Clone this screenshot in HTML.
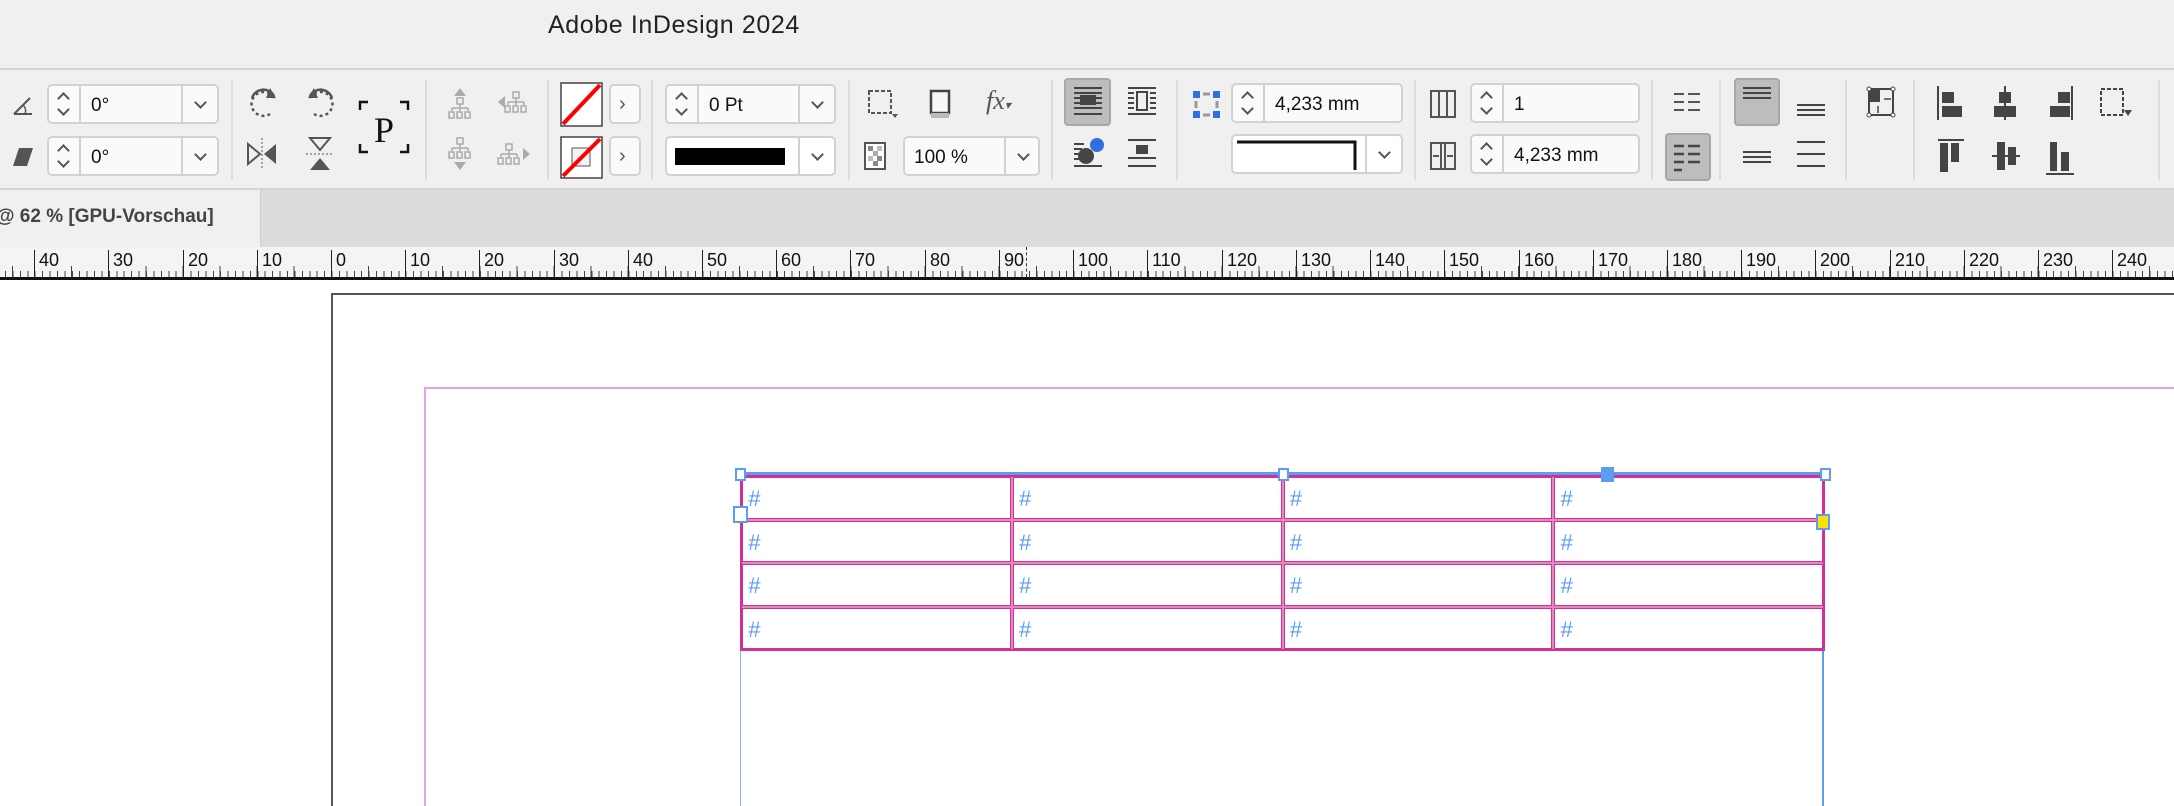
<!DOCTYPE html>
<html><head><meta charset="utf-8">
<style>
*{margin:0;padding:0;box-sizing:border-box}
body{width:2174px;height:806px;overflow:hidden;background:#fff;font-family:"Liberation Sans",sans-serif;position:relative}
.a{position:absolute}
#title{left:0;top:0;width:2174px;height:68px;background:#f0f0f0}
#title span{position:absolute;left:548px;top:11px;font-size:25px;letter-spacing:0.6px;color:#222}
#tb{left:0;top:68px;width:2174px;height:122px;background:#f0f0f0;border-top:2px solid #d4d4d4;border-bottom:2px solid #d4d4d4}
.box{position:absolute;height:40px;background:#fafafa;border:2px solid #d2d2d2;border-radius:5px;font-size:19px;color:#111}
.box .st{position:absolute;left:0;top:0;width:32px;height:100%;border-right:2px solid #d2d2d2}
.box .st:before{content:"";position:absolute;left:10px;top:8px;width:7px;height:7px;border-left:2px solid #555;border-top:2px solid #555;transform:rotate(45deg)}
.box .st:after{content:"";position:absolute;left:10px;bottom:8px;width:7px;height:7px;border-right:2px solid #555;border-bottom:2px solid #555;transform:rotate(45deg)}
.box .t{position:absolute;left:42px;top:9px}
.box .dd{position:absolute;right:0;top:0;width:36px;height:100%;border-left:2px solid #d2d2d2}
.box .dd:after{content:"";position:absolute;left:13px;top:12px;width:7px;height:7px;border-right:2px solid #555;border-bottom:2px solid #555;transform:rotate(45deg)}
.sep{position:absolute;top:80px;width:2px;height:100px;background:#dcdcdc}
.sel{position:absolute;background:#bdbdbd;border:2px solid #a8a8a8;border-radius:4px}
#tab{left:0;top:190px;width:2174px;height:57px;background:#dcdcdc}
#tab div{position:absolute;left:0;top:0;width:261px;height:57px;background:#f0f0f0;border-right:1px solid #cfcfcf}
#tab span{position:absolute;left:-4px;top:16px;font-size:19px;color:#444;font-weight:bold}
#ruler{left:0;top:247px;width:2174px;height:33px;background:#f4f4f4;border-bottom:3px solid #111}
.tk{position:absolute;left:0;bottom:0;width:2174px}
.lb{position:absolute;top:3px;font-size:18px;color:#111;padding-left:4px;border-left:1px solid #222;height:27px}
.h{position:absolute;background:#fff;border:2px solid #5b9cf5}
.c{background:#fff;border:1.5px solid #d42f97;position:relative}.c:after{content:"#";position:absolute;left:5px;top:8px;font-size:22px;font-style:italic;color:#5b9cf5}
</style></head><body>
<div class="a" id="title"><span>Adobe InDesign 2024</span></div>
<div class="a" id="tb">
<svg class="a" style="left:10px;top:22px" width="26" height="26"><path d="M4 22 L22 22 M4 22 L20 6" stroke="#555" stroke-width="2" fill="none"/><path d="M13 13 Q17 17 15 22" stroke="#555" stroke-width="1.5" fill="none"/></svg>
<svg class="a" style="left:10px;top:74px" width="26" height="26"><path d="M9 4 L23 4 L17 22 L3 22Z" fill="#555"/></svg>
<div class="box" style="left:47px;top:14px;width:172px"><div class="st"></div><span class="t">0°</span><div class="dd"></div></div>
<div class="box" style="left:47px;top:66px;width:172px"><div class="st"></div><span class="t">0°</span><div class="dd"></div></div>
<div class="sep" style="left:231px;top:10px"></div>
<svg class="a" style="left:246px;top:14px" width="36" height="38"><path d="M28 14 A12 12 0 1 0 24 30" stroke="#555" stroke-width="2.5" fill="none" stroke-dasharray="3 3"/><path d="M6 14 A12 12 0 0 1 28 12" stroke="#555" stroke-width="2.5" fill="none"/><path d="M24 4 L30 14 L20 14Z" fill="#555"/></svg>
<svg class="a" style="left:302px;top:14px" width="36" height="38"><path d="M8 14 A12 12 0 1 1 12 30" stroke="#555" stroke-width="2.5" fill="none" stroke-dasharray="3 3"/><path d="M30 14 A12 12 0 0 0 8 12" stroke="#555" stroke-width="2.5" fill="none"/><path d="M12 4 L6 14 L16 14Z" fill="#555"/></svg>
<svg class="a" style="left:246px;top:66px" width="36" height="38"><path d="M2 8 L14 18 L2 28Z" stroke="#555" stroke-width="2" fill="none"/><path d="M30 8 L18 18 L30 28Z" fill="#555"/><path d="M16 2V34" stroke="#555" stroke-dasharray="2 2"/></svg>
<svg class="a" style="left:302px;top:66px" width="36" height="38"><path d="M8 2 L28 2 L18 14Z" stroke="#555" stroke-width="2" fill="none"/><path d="M8 34 L28 34 L18 22Z" fill="#555"/><path d="M4 18H32" stroke="#555" stroke-dasharray="2 2"/></svg>
<svg class="a" style="left:358px;top:30px" width="52" height="54"><path d="M2 10V2H10M42 2H50V10M2 44V52H10M42 52H50V44" stroke="#111" stroke-width="2.5" fill="none"/><text x="16" y="42" font-family="Liberation Serif" font-size="36" fill="#111">P</text></svg>
<div class="sep" style="left:425px;top:10px"></div>
<svg class="a" style="left:446px;top:16px" width="28" height="34"><path d="M8 10L14 2L20 10Z" fill="#aaa"/><rect x="11" y="12" width="6" height="6" fill="none" stroke="#aaa" stroke-width="1.5"/><path d="M14 18V22M6 22H22M6 22V25M14 22V25M22 22V25" stroke="#aaa" stroke-width="1.5"/><rect x="3" y="26" width="5" height="6" fill="none" stroke="#aaa" stroke-width="1.5"/><rect x="11" y="26" width="5" height="6" fill="none" stroke="#aaa" stroke-width="1.5"/><rect x="19" y="26" width="5" height="6" fill="none" stroke="#aaa" stroke-width="1.5"/></svg>
<svg class="a" style="left:496px;top:18px" width="36" height="30"><path d="M2 14L9 8V20Z" fill="#aaa"/><rect x="17" y="4" width="6" height="6" fill="none" stroke="#aaa" stroke-width="1.5"/><path d="M20 10V14M12 14H28M12 14V17M20 14V17M28 14V17" stroke="#aaa" stroke-width="1.5"/><rect x="9" y="18" width="5" height="6" fill="none" stroke="#aaa" stroke-width="1.5"/><rect x="17" y="18" width="5" height="6" fill="none" stroke="#aaa" stroke-width="1.5"/><rect x="25" y="18" width="5" height="6" fill="none" stroke="#aaa" stroke-width="1.5"/></svg>
<svg class="a" style="left:446px;top:66px" width="28" height="38"><rect x="11" y="2" width="6" height="6" fill="none" stroke="#aaa" stroke-width="1.5"/><path d="M14 8V12M6 12H22M6 12V15M14 12V15M22 12V15" stroke="#aaa" stroke-width="1.5"/><rect x="3" y="16" width="5" height="6" fill="none" stroke="#aaa" stroke-width="1.5"/><rect x="11" y="16" width="5" height="6" fill="none" stroke="#aaa" stroke-width="1.5"/><rect x="19" y="16" width="5" height="6" fill="none" stroke="#aaa" stroke-width="1.5"/><path d="M8 26L14 34L20 26Z" fill="#aaa"/></svg>
<svg class="a" style="left:496px;top:70px" width="36" height="30"><rect x="10" y="4" width="6" height="6" fill="none" stroke="#aaa" stroke-width="1.5"/><path d="M13 10V14M5 14H21M5 14V17M13 14V17M21 14V17" stroke="#aaa" stroke-width="1.5"/><rect x="2" y="18" width="5" height="6" fill="none" stroke="#aaa" stroke-width="1.5"/><rect x="10" y="18" width="5" height="6" fill="none" stroke="#aaa" stroke-width="1.5"/><rect x="18" y="18" width="5" height="6" fill="none" stroke="#aaa" stroke-width="1.5"/><path d="M34 14L27 8V20Z" fill="#aaa"/></svg>
<div class="sep" style="left:547px;top:10px"></div>
<svg class="a" style="left:560px;top:12px" width="44" height="46"><rect x="1" y="1" width="41" height="43" fill="#fff" stroke="#444" stroke-width="1.5"/><path d="M3 42L40 3" stroke="#f00" stroke-width="4"/></svg>
<svg class="a" style="left:560px;top:66px" width="44" height="44"><rect x="1" y="1" width="41" height="41" fill="#fff" stroke="#444" stroke-width="1.5"/><rect x="12" y="12" width="18" height="18" fill="#f4f4f4" stroke="#555"/><path d="M3 40L40 3" stroke="#f00" stroke-width="4"/></svg>
<div class="box" style="left:609px;top:14px;width:32px"><span style="position:absolute;left:8px;top:7px;font-size:20px;color:#555">›</span></div>
<div class="box" style="left:609px;top:66px;width:32px"><span style="position:absolute;left:8px;top:7px;font-size:20px;color:#555">›</span></div>
<div class="sep" style="left:651px;top:10px"></div>
<div class="box" style="left:665px;top:14px;width:171px"><div class="st"></div><span class="t">0 Pt</span><div class="dd"></div></div>
<div class="box" style="left:665px;top:66px;width:171px;background:#fff"><div style="position:absolute;left:8px;top:10px;width:110px;height:17px;background:#000"></div><div class="dd"></div></div>
<div class="sep" style="left:848px;top:10px"></div>
<svg class="a" style="left:866px;top:18px" width="34" height="32"><rect x="3" y="3" width="22" height="22" fill="none" stroke="#555" stroke-width="2" stroke-dasharray="4 2"/><path d="M26 26L32 26L29 30Z" fill="#555"/></svg>
<svg class="a" style="left:928px;top:18px" width="26" height="32"><rect x="3" y="3" width="18" height="22" fill="#f8f8f8" stroke="#444" stroke-width="2.5"/><rect x="3" y="25" width="18" height="5" fill="#bbb"/></svg>
<span class="a" style="left:986px;top:16px;font-family:'Liberation Serif';font-style:italic;font-size:26px;color:#555">fx<span style="font-size:12px">▾</span></span>
<svg class="a" style="left:864px;top:72px" width="22" height="28"><rect x="1" y="1" width="20" height="26" fill="#fff" stroke="#555" stroke-width="2"/><rect x="4" y="4" width="5" height="5" fill="#888"/><rect x="13" y="4" width="5" height="5" fill="#bbb"/><rect x="9" y="9" width="5" height="5" fill="#aaa"/><rect x="4" y="14" width="5" height="5" fill="#bbb"/><rect x="13" y="14" width="5" height="5" fill="#888"/><rect x="9" y="19" width="5" height="5" fill="#888"/></svg>
<div class="box" style="left:903px;top:66px;width:137px"><span class="t" style="left:9px">100 %</span><div class="dd" style="width:34px"></div></div>
<div class="sep" style="left:1051px;top:10px"></div>
<div class="sel" style="left:1064px;top:8px;width:47px;height:48px"></div>
<svg class="a" style="left:1072px;top:16px" width="32" height="32"><path d="M2 2H30M2 7H30M2 12H30M2 17H30M2 22H30M2 28H30" stroke="#444" stroke-width="2"/><rect x="8" y="9" width="16" height="10" fill="#444"/></svg>
<svg class="a" style="left:1126px;top:16px" width="32" height="32"><path d="M2 2H30M2 7H8M2 12H8M2 17H8M2 22H8M24 7H30M24 12H30M24 17H30M24 22H30M2 28H30" stroke="#444" stroke-width="2"/><rect x="11" y="6" width="10" height="18" fill="none" stroke="#444" stroke-width="2"/></svg>
<svg class="a" style="left:1072px;top:66px" width="36" height="34"><path d="M2 8H12M2 13H10M2 18H10M2 23H10M2 30H30" stroke="#444" stroke-width="2"/><circle cx="14" cy="20" r="8" fill="#444"/><circle cx="25" cy="9" r="7" fill="#2f6fe0"/></svg>
<svg class="a" style="left:1126px;top:66px" width="32" height="34"><path d="M2 4H30M2 30H30M2 22H30" stroke="#444" stroke-width="2"/><rect x="10" y="9" width="12" height="9" fill="#444"/></svg>
<div class="sep" style="left:1176px;top:10px"></div>
<svg class="a" style="left:1192px;top:20px" width="30" height="30"><rect x="1" y="1" width="7" height="7" fill="#2f6fe0"/><rect x="21" y="1" width="7" height="7" fill="#2f6fe0"/><rect x="1" y="21" width="7" height="7" fill="#2f6fe0"/><rect x="21" y="21" width="7" height="7" fill="#2f6fe0"/><path d="M11 4H18M11 25H18M4 11V18M25 11V18" stroke="#999" stroke-width="3"/></svg>
<div class="box" style="left:1231px;top:13px;width:172px"><div class="st"></div><span class="t">4,233 mm</span></div>
<div class="box" style="left:1231px;top:64px;width:172px;background:#fff"><svg class="a" style="left:4px;top:4px" width="120" height="30"><path d="M0 2H118V30" stroke="#111" stroke-width="3" fill="none"/></svg><div class="dd"></div></div>
<div class="sep" style="left:1414px;top:10px"></div>
<svg class="a" style="left:1430px;top:20px" width="28" height="30"><rect x="1" y="1" width="24" height="26" fill="none" stroke="#555" stroke-width="2"/><path d="M9 1V27M17 1V27" stroke="#555" stroke-width="2"/></svg>
<svg class="a" style="left:1430px;top:72px" width="28" height="30"><rect x="1" y="1" width="24" height="26" fill="none" stroke="#555" stroke-width="2"/><path d="M11 1V27M15 1V27M3 14H9M23 14H17" stroke="#555" stroke-width="2"/></svg>
<div class="box" style="left:1470px;top:13px;width:170px"><div class="st"></div><span class="t">1</span></div>
<div class="box" style="left:1470px;top:64px;width:170px"><div class="st"></div><span class="t">4,233 mm</span></div>
<div class="sep" style="left:1651px;top:10px"></div>
<svg class="a" style="left:1672px;top:22px" width="30" height="26"><path d="M2 2H12M16 2H28M2 10H12M16 10H28M2 18H12M16 18H28" stroke="#555" stroke-width="2"/></svg>
<div class="sel" style="left:1665px;top:63px;width:46px;height:48px"></div>
<svg class="a" style="left:1672px;top:74px" width="30" height="30"><path d="M2 2H12M16 2H28M2 10H12M16 10H28M2 18H12M16 18H28M2 26H10" stroke="#444" stroke-width="2.5"/></svg>
<div class="sep" style="left:1719px;top:10px"></div>
<div class="sel" style="left:1734px;top:8px;width:46px;height:48px"></div>
<svg class="a" style="left:1741px;top:16px" width="32" height="16"><path d="M2 2H30M2 7H30M2 12H30" stroke="#444" stroke-width="2"/></svg>
<svg class="a" style="left:1795px;top:33px" width="32" height="16"><path d="M2 2H30M2 7H30M2 12H30" stroke="#444" stroke-width="2"/></svg>
<svg class="a" style="left:1741px;top:80px" width="32" height="16"><path d="M2 2H30M2 7H30M2 12H30" stroke="#444" stroke-width="2"/></svg>
<svg class="a" style="left:1795px;top:70px" width="32" height="30"><path d="M2 2H30M2 14H30M2 26H30" stroke="#444" stroke-width="2"/></svg>
<div class="sep" style="left:1845px;top:10px"></div>
<svg class="a" style="left:1866px;top:16px" width="32" height="34"><rect x="3" y="3" width="24" height="26" fill="none" stroke="#444" stroke-width="2"/><rect x="4" y="4" width="10" height="12" fill="#444"/><circle cx="3" cy="3" r="2" fill="#fff" stroke="#444"/><circle cx="27" cy="3" r="2" fill="#fff" stroke="#444"/><circle cx="3" cy="29" r="2" fill="#fff" stroke="#444"/><circle cx="27" cy="29" r="2" fill="#fff" stroke="#444"/><path d="M25 13H18M12 27V20" stroke="#444" stroke-width="1.5"/></svg>
<div class="sep" style="left:1913px;top:10px"></div>
<svg class="a" style="left:1936px;top:14px" width="32" height="38"><path d="M2 2V36" stroke="#444" stroke-width="2"/><rect x="6" y="8" width="12" height="11" fill="#444"/><rect x="6" y="22" width="20" height="11" fill="#444"/></svg>
<svg class="a" style="left:1990px;top:14px" width="32" height="38"><path d="M15 2V36" stroke="#444" stroke-width="2"/><rect x="9" y="8" width="12" height="11" fill="#444"/><rect x="4" y="22" width="22" height="11" fill="#444"/></svg>
<svg class="a" style="left:2044px;top:14px" width="32" height="38"><path d="M28 2V36" stroke="#444" stroke-width="2"/><rect x="14" y="8" width="12" height="11" fill="#444"/><rect x="6" y="22" width="20" height="11" fill="#444"/></svg>
<svg class="a" style="left:2098px;top:16px" width="36" height="34"><rect x="3" y="3" width="22" height="26" fill="none" stroke="#444" stroke-width="2" stroke-dasharray="4 2"/><path d="M26 24L34 24L30 30Z" fill="#444"/></svg>
<svg class="a" style="left:1936px;top:68px" width="32" height="38"><path d="M2 2H28" stroke="#444" stroke-width="2"/><rect x="4" y="5" width="8" height="29" fill="#444"/><rect x="15" y="5" width="8" height="19" fill="#444"/></svg>
<svg class="a" style="left:1990px;top:70px" width="32" height="34"><path d="M2 16H30" stroke="#444" stroke-width="2"/><rect x="7" y="2" width="8" height="28" fill="#444"/><rect x="18" y="7" width="8" height="18" fill="#444"/></svg>
<svg class="a" style="left:2044px;top:68px" width="32" height="38"><path d="M2 36H30" stroke="#444" stroke-width="2"/><rect x="6" y="4" width="7" height="29" fill="#444"/><rect x="17" y="14" width="8" height="19" fill="#444"/></svg>
<div class="sep" style="left:2158px;top:10px"></div>
</div>
<div class="a" id="tab"><div><span>@ 62 % [GPU-Vorschau]</span></div></div>
<div class="a" id="ruler">
<div class="tk" style="height:6px;background:repeating-linear-gradient(90deg,#444 0 1px,transparent 1px 7.421px);background-position:5px 0"></div>
<div class="tk" style="height:11px;background:repeating-linear-gradient(90deg,#444 0 1px,transparent 1px 37.105px);background-position:34px 0"></div>
<span class="lb" style="left:34px">40</span><span class="lb" style="left:108px">30</span><span class="lb" style="left:183px">20</span><span class="lb" style="left:257px">10</span><span class="lb" style="left:331px">0</span><span class="lb" style="left:405px">10</span><span class="lb" style="left:479px">20</span><span class="lb" style="left:554px">30</span><span class="lb" style="left:628px">40</span><span class="lb" style="left:702px">50</span><span class="lb" style="left:776px">60</span><span class="lb" style="left:850px">70</span><span class="lb" style="left:925px">80</span><span class="lb" style="left:999px">90</span><span class="lb" style="left:1073px">100</span><span class="lb" style="left:1147px">110</span><span class="lb" style="left:1222px">120</span><span class="lb" style="left:1296px">130</span><span class="lb" style="left:1370px">140</span><span class="lb" style="left:1444px">150</span><span class="lb" style="left:1519px">160</span><span class="lb" style="left:1593px">170</span><span class="lb" style="left:1667px">180</span><span class="lb" style="left:1741px">190</span><span class="lb" style="left:1815px">200</span><span class="lb" style="left:1890px">210</span><span class="lb" style="left:1964px">220</span><span class="lb" style="left:2038px">230</span><span class="lb" style="left:2112px">240</span>
<div class="a" style="left:1026px;top:0;height:30px;border-left:1px dashed #333"></div>
</div>
<div class="a" style="left:331px;top:293px;width:1843px;height:513px;border-left:2px solid #555;border-top:2px solid #555"></div>
<div class="a" style="left:424px;top:387px;width:1750px;height:419px;border-left:2px solid #e7a0ee;border-top:2px solid #e7a0ee"></div>
<div class="a" style="left:740px;top:650px;width:1px;height:156px;background:#8ab6f7"></div>
<div class="a" style="left:1822px;top:650px;width:2px;height:156px;background:#5b9cf5"></div>
<div class="a" style="left:740px;top:472px;width:1085px;height:3px;background:#5b9cf5"></div>
<div class="a" style="left:740px;top:475px;width:1085px;height:176px;border:2px solid #d42f97;display:grid;grid-template-columns:repeat(4,1fr);grid-template-rows:repeat(4,1fr);gap:2px;background:#e08ac0">
<div class="c"></div><div class="c"></div><div class="c"></div><div class="c"></div>
<div class="c"></div><div class="c"></div><div class="c"></div><div class="c"></div>
<div class="c"></div><div class="c"></div><div class="c"></div><div class="c"></div>
<div class="c"></div><div class="c"></div><div class="c"></div><div class="c"></div>
</div>
<div class="h" style="left:735px;top:468px;width:11px;height:13px"></div>
<div class="h" style="left:1278px;top:468px;width:11px;height:13px"></div>
<div class="h" style="left:1820px;top:468px;width:11px;height:13px"></div>
<div class="h" style="left:1601px;top:467px;width:13px;height:15px;background:#5b9cf5"></div>
<div class="h" style="left:733px;top:506px;width:15px;height:17px"></div>
<div class="h" style="left:1816px;top:514px;width:14px;height:16px;background:#ffe100"></div>
</body></html>
